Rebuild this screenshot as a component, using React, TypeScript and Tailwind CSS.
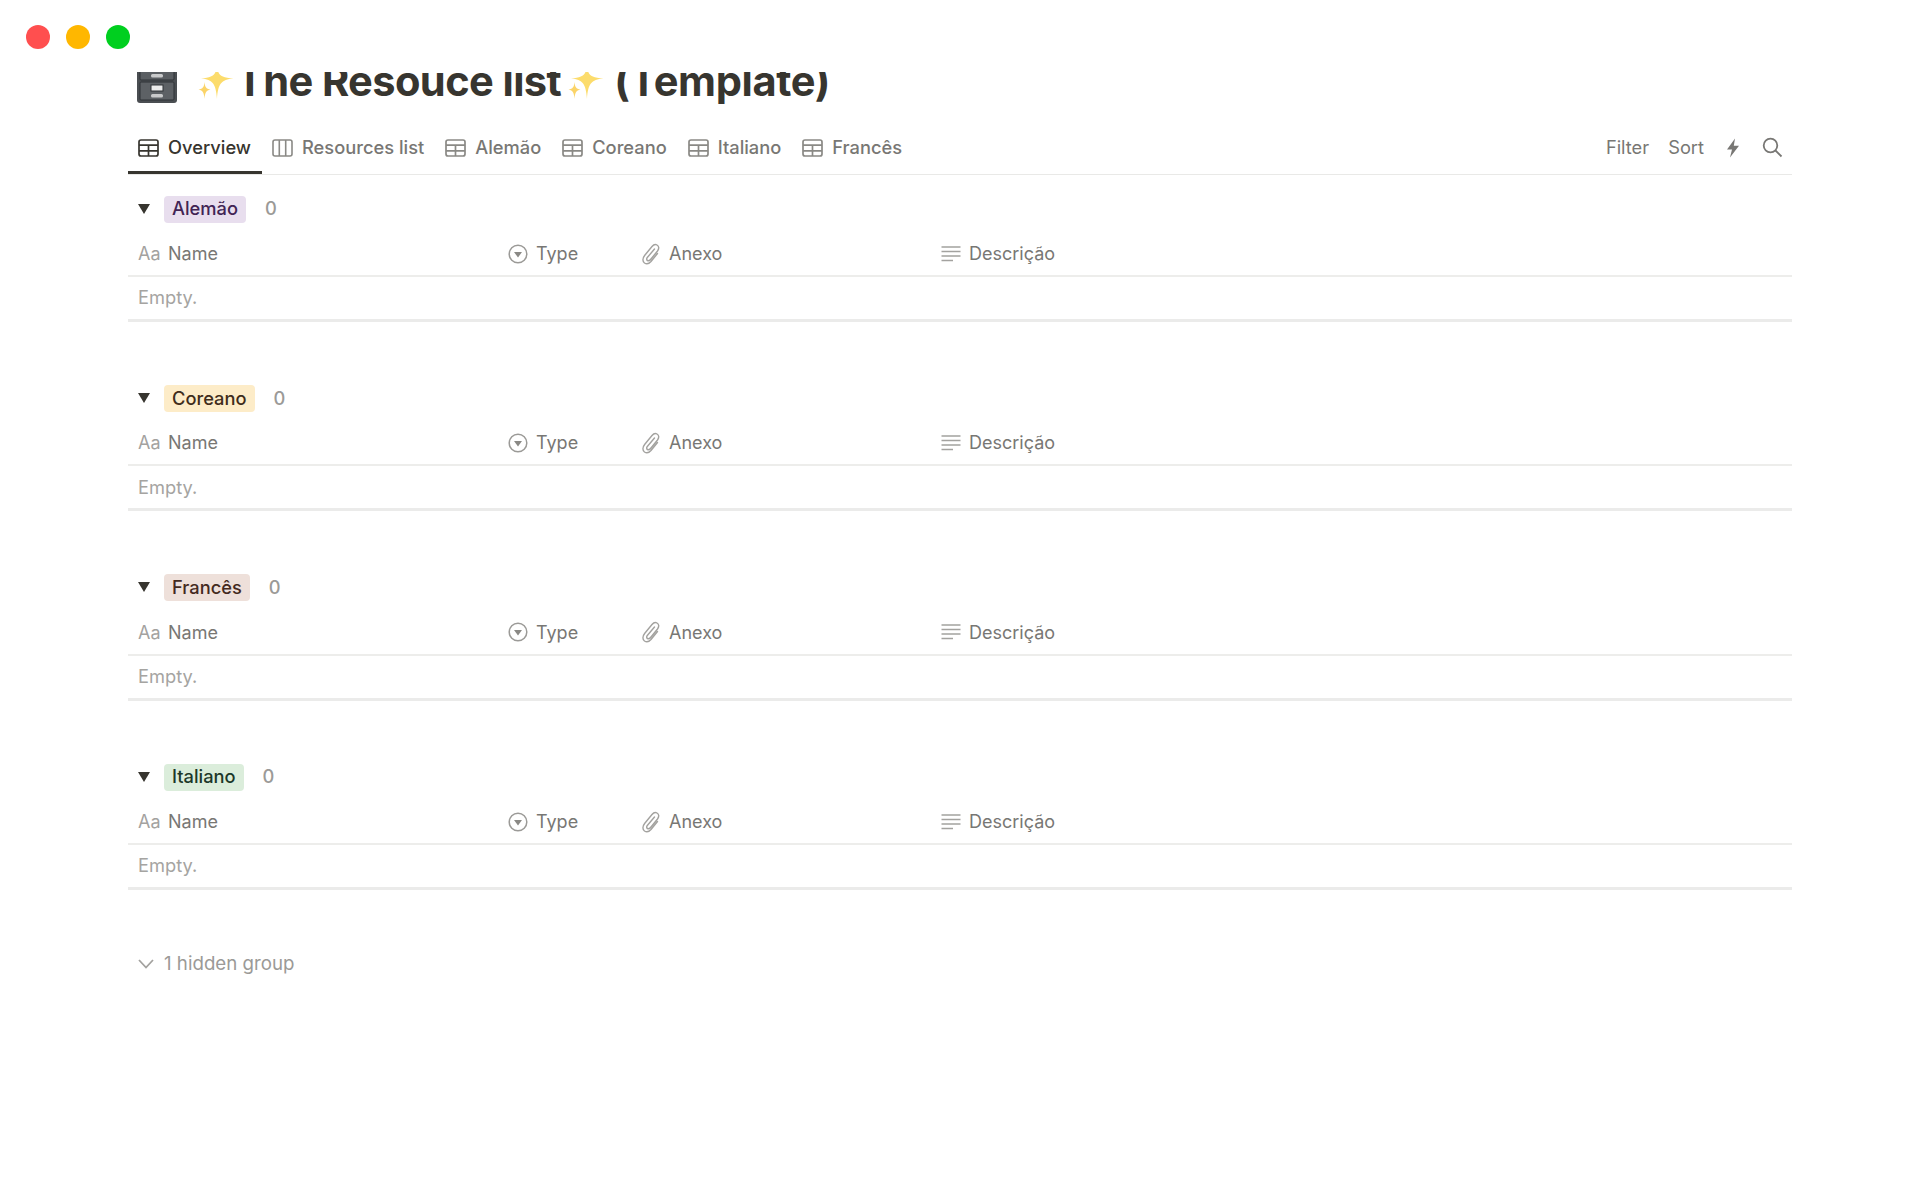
const font = "font-['Inter','Liberation_Sans',sans-serif]";

function TableIcon({ dark = false }: { dark?: boolean }) {
  const c = dark ? "#37352f" : "#8a8985";
  return (
    <svg width="21" height="18" viewBox="0 0 21 18" fill="none" stroke={c} strokeWidth="1.7" className="shrink-0">
      <rect x="1" y="1" width="19" height="16" rx="2" />
      <path d="M1 6.200H20M1 11.800H20M10.500 6.200V17" />
    </svg>
  );
}

function BoardIcon() {
  return (
    <svg width="21" height="18" viewBox="0 0 21 18" fill="none" stroke="#8a8985" strokeWidth="1.6" className="shrink-0">
      <rect x="1" y="1" width="19" height="16" rx="2" />
      <path d="M7.300 1V17M13.700 1V17" />
    </svg>
  );
}

function Sparkles() {
  return (
    <svg width="37" height="40" viewBox="0 0 37 40" className="shrink-0">
      <path d="M20 1C20.500 11 22 14.500 36.500 15.500C24 16.700 21 21 20 36C19 21 16 16.700 4 15.500C17 14.500 19.500 11 20 1Z" fill="#fcdc6c" />
      <path d="M7.500 19C8 24 9 25.800 13.500 26.500C9 27.500 8 29.500 7.500 36C7 29.500 6 27.500 1.500 26.500C6 25.800 7 24 7.500 19Z" fill="#fbd468" />
      <path d="M3 1L3.800 5L3 9L2.200 5Z" fill="#f7b267" />
    </svg>
  );
}

function Cabinet() {
  return (
    <svg width="42" height="56" viewBox="0 0 42 56" className="shrink-0">
      <rect x="1" y="0" width="40" height="56" rx="3" fill="#4a4e52" />
      <rect x="4" y="4" width="34" height="29" rx="1" fill="#5a5e62" stroke="#2f3236" />
      <rect x="4" y="35" width="34" height="18" rx="1" fill="#5d6165" stroke="#2f3236" />
      <rect x="15" y="38" width="12" height="6" fill="#ebebeb" stroke="#2f3236" />
      <rect x="15" y="47" width="12" height="3.500" rx="1.500" fill="#c9cacb" />
      <rect x="15" y="27" width="12" height="3.500" rx="1.500" fill="#c9cacb" />
    </svg>
  );
}

function TypeIcon() {
  return (
    <svg width="20" height="20" viewBox="0 0 20 20" fill="none" className="shrink-0">
      <circle cx="10" cy="10" r="8.800" stroke="#9b9a97" strokeWidth="1.500" />
      <path d="M6 8H14L10 13.500Z" fill="#8a8985" />
    </svg>
  );
}

function ClipIcon() {
  return (
    <svg width="20" height="22" viewBox="0 0 20 22" fill="none" stroke="#a3a29f" strokeWidth="1.400" strokeLinecap="round" className="shrink-0">
      <path d="M13.500 6L6.300 14.500C5 16.200 6 18 7.500 17.700C8.500 17.600 9.200 17 10 16L16.500 8C18.500 5.300 17.800 3 16 2C14.300 1.100 12.500 1.700 11 3.500L3.800 12.300C1.200 15.500 1.500 18.500 3.500 20C5.500 21.300 8 20.700 10 18.500L16.500 10.500" />
    </svg>
  );
}

function TextIcon() {
  return (
    <svg width="20" height="18" viewBox="0 0 20 18" fill="none" stroke="#a3a29f" strokeWidth="1.500" className="shrink-0">
      <path d="M0.500 2H19.500M0.500 6.500H19.500M0.500 11H19.500M0.500 15.500H12" />
    </svg>
  );
}

function Tab({ label, active = false, board = false }: { label: string; active?: boolean; board?: boolean }) {
  return (
    <div className={`flex h-full items-center gap-[9px] pl-[10px] pr-[11px] pb-[3px] border-b-[3px] ${active ? "border-[#37352f] text-[#37352f]" : "border-transparent text-[#787774]"}`}>
      {board ? <BoardIcon /> : <TableIcon dark={active} />}
      <span className="text-[18.300px] font-medium">{label}</span>
    </div>
  );
}

function Group({ label, bg, fg }: { label: string; bg: string; fg: string }) {
  return (
    <section className="mb-[59.400px]">
      <div className="flex h-[34px] items-center">
        <svg width="14" height="12" viewBox="0 0 14 12" className="ml-[9px] mr-[13px] -mt-[1px]">
          <path d="M1 1H13L7 11Z" fill="#37352f" />
        </svg>
        <span className={`flex h-[27px] items-center rounded-[4px] px-2 text-[18.300px] font-medium ${bg} ${fg}`}>{label}</span>
        <span className="ml-[19px] text-[18.300px] font-medium text-[#9b9a97]">0</span>
      </div>
      <div className="mt-[6px] grid h-[45px] grid-cols-[370px_132px_300px_1fr] items-center border-b-2 border-[#ededeb] text-[18px] text-[#787774]">
        <div className="flex items-center pl-[10px]">
          <span className="w-[30px] text-[#a3a29f]">Aa</span>
          <span>Name</span>
        </div>
        <div className="flex items-center gap-[8px] pl-[10px]"><TypeIcon /><span>Type</span></div>
        <div className="flex items-center gap-[8px] pl-[11px]"><ClipIcon /><span>Anexo</span></div>
        <div className="flex items-center gap-[8px] pl-[11px]"><TextIcon /><span>Descrição</span></div>
      </div>
      <div className="flex h-[45px] items-center border-b-[3px] border-[#ebebea] pl-[10px] text-[18.300px] text-[#a5a4a1]">Empty.</div>
    </section>
  );
}

export default function App() {
  return (
    <div className={`${font} min-h-[1200px] bg-white text-[#37352f] antialiased`}>
      <header className="flex h-[72px] items-start gap-4 pl-[26px] pt-[25px]">
        <span className="h-6 w-6 rounded-full bg-[#ff4f4f]" />
        <span className="h-6 w-6 rounded-full bg-[#ffb700]" />
        <span className="h-6 w-6 rounded-full bg-[#00cf1f]" />
      </header>
      <main className="px-[128px]">
        <div className="h-[40px] overflow-hidden">
          <div className="-mt-[19px] flex items-center pl-[8px] text-[41.600px] font-bold leading-[56px] tracking-[-0.6px] text-[#37352f] whitespace-nowrap">
            <span className="-mt-[12px]"><Cabinet /></span>
            <span className="ml-[19px] mt-[4px]"><Sparkles /></span>
            <span className="ml-[2px]">The Resouce list</span>
            <span className="ml-[6px] mt-[4px]"><Sparkles /></span>
            <span className="ml-[10px] tracking-[-0.35px]">(Template)</span>
          </div>
        </div>
        <nav className="mt-[15px] flex h-[48px] items-center justify-between border-b border-[#e9e9e7]">
          <div className="flex h-full items-center">
            <Tab label="Overview" active />
            <Tab label="Resources list" board />
            <Tab label="Alemão" />
            <Tab label="Coreano" />
            <Tab label="Italiano" />
            <Tab label="Francês" />
          </div>
          <div className="flex items-center pr-[9px] pb-[6px] text-[18.300px] text-[#787774]">
            <span>Filter</span>
            <span className="ml-[19px]">Sort</span>
            <svg width="16" height="20" viewBox="0 0 16 20" className="ml-[21px]">
              <path d="M10 0.500L2 11.500H7L5 19.500L14 7.800H8.800Z" fill="#787774" />
            </svg>
            <svg width="21" height="21" viewBox="0 0 21 21" fill="none" stroke="#787774" strokeWidth="1.800" className="ml-[21px]">
              <circle cx="8.500" cy="8.500" r="6.800" />
              <path d="M13.500 13.500L19.500 19.500" />
            </svg>
          </div>
        </nav>
        <div className="mt-[17px]">
          <Group label="Alemão" bg="bg-[#e8deee]" fg="text-[#412454]" />
          <Group label="Coreano" bg="bg-[#fdecc8]" fg="text-[#402c1b]" />
          <Group label="Francês" bg="bg-[#eee0da]" fg="text-[#442a1e]" />
          <Group label="Italiano" bg="bg-[#dbeddb]" fg="text-[#1c3829]" />
        </div>
        <div className="flex items-center mt-[1px] pl-[10px] text-[18.700px] text-[#9b9a97]">
          <svg width="16" height="10" viewBox="0 0 16 10" fill="none" stroke="#a3a29f" strokeWidth="1.800" className="mr-[10px]">
            <path d="M1 1L8 8.500L15 1" />
          </svg>
          <span>1 hidden group</span>
        </div>
      </main>
    </div>
  );
}
